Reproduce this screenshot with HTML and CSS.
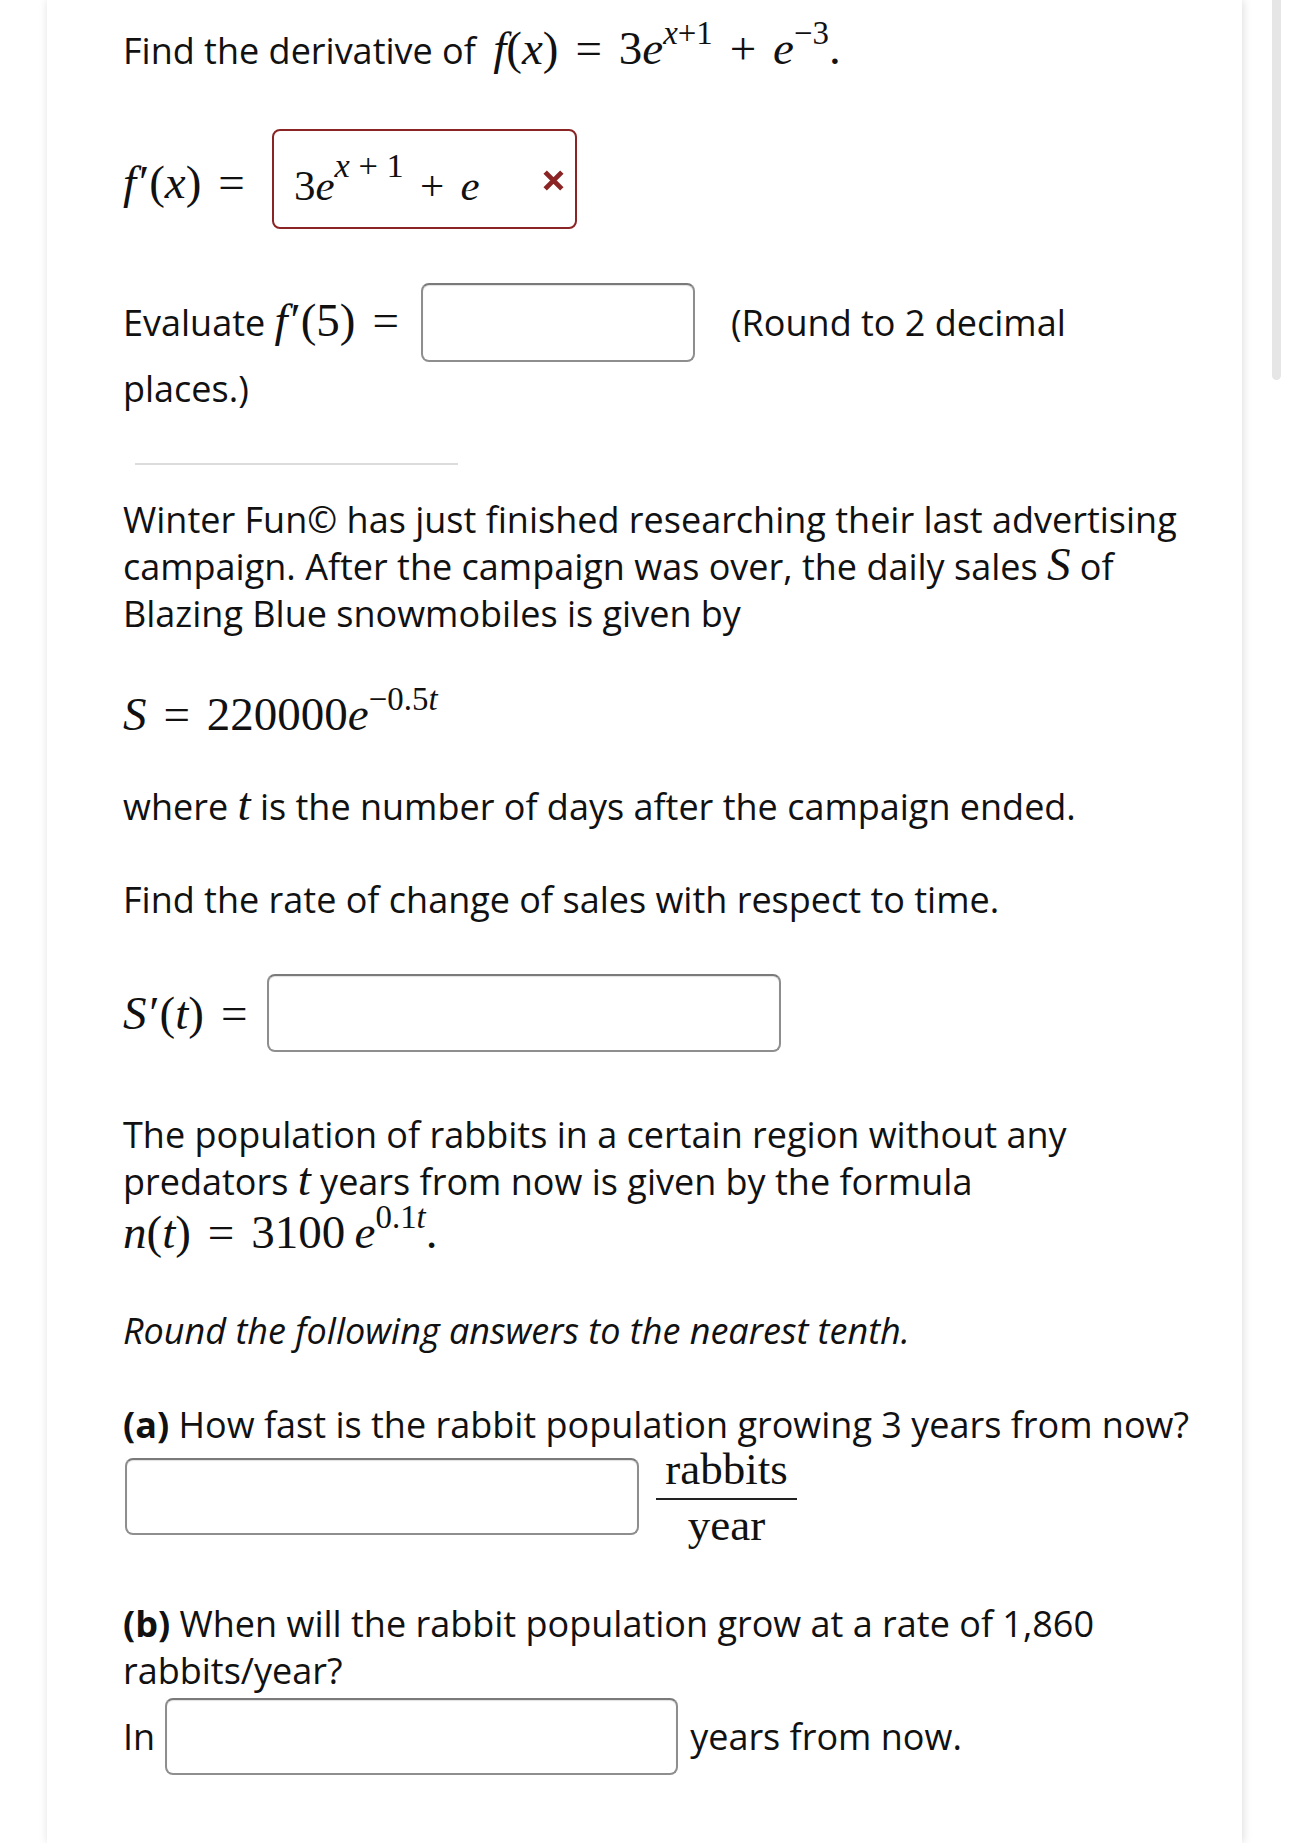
FILE: index.html
```html
<!DOCTYPE html>
<html lang="en">
<head>
  <meta charset="UTF-8">
  <meta name="viewport" content="width=device-width, initial-scale=1.0">
  <title>Exponential Functions - Homework</title>
  <link rel="stylesheet" href="styles.css">
</head>
<body>
  <div class="scroll-thumb"></div>

  <main class="sheet">
    <!-- Question 1: derivative of f -->
    <p class="lead">Find the derivative of <span class="m"><i>f</i>(<i>x</i>)<span class="op">=</span>3<i>e</i><sup><i>x</i>+1</sup><span class="op">+</span><i>e</i><sup>−3</sup>.</span></p>

    <div class="row deriv-row">
      <span class="label m"><i>f</i><span class="pr">′</span>(<i>x</i>)<span class="op">=</span></span>
      <div class="field wrong">
        <span class="entry">3<i>e</i><sup><i>x</i><span class="op">+</span>1</sup><span class="op">+</span><i>e</i></span>
        <svg class="mark" viewBox="0 0 24 24" width="25" height="25">
          <path d="M4 4 L20 20 M20 4 L4 20" stroke="#8b2424" stroke-width="4.6" fill="none"/>
        </svg>
      </div>
    </div>

    <div class="row eval-row">
      <span class="label">Evaluate <span class="m"><i>f</i><span class="pr">′</span>(5)<span class="op">=</span></span></span>
      <div class="field eval-field"></div>
      <span class="hint">(Round to 2 decimal</span>
    </div>
    <p>places.)</p>

    <hr class="divider">

    <!-- Question 2: sales after the campaign -->
    <p class="story">Winter Fun© has just finished researching their last advertising<br>
      campaign. After the campaign was over, the daily sales <span class="m"><i>S</i></span> of<br>
      Blazing Blue snowmobiles is given by</p>

    <p class="formula"><span class="m"><i>S</i><span class="op">=</span>220000<i>e</i><sup>−0.5<i>t</i></sup></span></p>

    <p class="where">where <span class="m"><i>t</i></span> is the number of days after the campaign ended.</p>

    <p class="task">Find the rate of change of sales with respect to time.</p>

    <div class="row rate-row">
      <span class="label m"><i>S</i><span class="pr">′</span>(<i>t</i>)<span class="op">=</span></span>
      <div class="field"></div>
    </div>

    <!-- Question 3: rabbit population -->
    <p class="population">The population of rabbits in a certain region without any<br>
      predators <span class="m"><i>t</i></span> years from now is given by the formula<br>
      <span class="m tall"><i>n</i>(<i>t</i>)<span class="op">=</span>3100<span class="thin"></span><i>e</i><sup>0.1<i>t</i></sup>.</span></p>

    <p class="note">Round the following answers to the nearest tenth.</p>

    <p class="part-a"><b>(a)</b> How fast is the rabbit population growing 3 years from now?</p>
    <div class="row growth-row">
      <div class="field"></div>
      <span class="m frac">
        <span class="num">rabbits</span>
        <span class="den">year</span>
      </span>
    </div>

    <p class="part-b"><b>(b)</b> When will the rabbit population grow at a rate of 1,860<br>
      rabbits/year?</p>
    <div class="row when-row">
      <span>In</span>
      <div class="field"></div>
      <span>years from now.</span>
    </div>
  </main>
</body>
</html>
```

FILE: styles.css
```css
* {
  box-sizing: border-box;
}

body {
  margin: 0;
  background-color: #fff;
  font-family: 'Open Sans', 'Noto Sans', sans-serif;
  font-size: 36px;
  color: #111;
}

.scroll-thumb {
  position: fixed;
  top: 0;
  left: 1272px;
  width: 9px;
  height: 380px;
  background-color: #e6e6e6;
  border-radius: 0 0 5px 5px;
}

.sheet {
  width: 1195px;
  min-height: 1843px;
  margin-left: 47px;
  padding: 24px 0 40px 76px;
  background-color: #fff;
  box-shadow: 1px 0 9px rgba(0, 0, 0, 0.14);
}

/* text sits 3px low in its 47px line */
p {
  margin: 0 0 -3px;
  padding-top: 3px;
  line-height: 47px;
}

/* math set in a serif face */
.m {
  font-family: 'Liberation Serif', 'Times New Roman', serif;
  font-size: 47px;
  line-height: 0;
  white-space: nowrap;
}

.m.tall {
  line-height: 1.15;
}

.m sup {
  font-size: 0.7em;
  line-height: 0;
  vertical-align: 0.6em;
}

.m .op {
  margin: 0 0.36em;
}

.m sup .op {
  margin: 0;
}

.m .pr {
  margin: 0 0 0 0.06em;
}

.m .thin {
  display: inline-block;
  width: 0.2em;
}

.lead .m {
  margin-left: 8px;
}

.row {
  display: flex;
  align-items: center;
  line-height: 47px;
}

.label {
  flex: none;
}

/* answer boxes */
.field {
  flex: none;
  width: 514px;
  height: 78px;
  border: 2px solid #8e8e8e;
  border-top-color: #7a7a7a;
  border-radius: 8px;
  background-color: #fff;
  box-shadow: inset 0 1px 1px rgba(0, 0, 0, 0.12);
}

.field.wrong {
  width: 305px;
  height: 100px;
  border-color: #8b2424;
  box-shadow: none;
  display: flex;
  align-items: flex-end;
  justify-content: space-between;
  padding: 0 9px 0 20px;
}

.entry {
  font-family: 'Liberation Serif', 'Times New Roman', serif;
  font-size: 43px;
  line-height: 43px;
  margin-bottom: 20px;
  white-space: nowrap;
}

.entry sup {
  font-size: 0.8em;
  line-height: 0;
  vertical-align: 0.68em;
}

.entry sup .op {
  margin: 0 0.25em;
}

.entry .op {
  margin: 0 0.38em;
}

.mark {
  align-self: center;
  margin-top: 2px;
}

.deriv-row {
  margin-top: 58px;
}

.deriv-row .label {
  width: 149px;
  padding-top: 6px;
}

.eval-row {
  margin-top: 54px;
}

.eval-row .label {
  width: 298px;
}

.eval-field {
  width: 274px;
  height: 79px;
}

.hint {
  margin-left: 36px;
}

.divider {
  width: 323px;
  height: 2px;
  margin: 54px 0 0 12px;
  border: 0;
  background-color: #dcdcdc;
}

.story {
  margin-top: 28px;
}

.formula {
  margin-top: 56px;
}

.where {
  margin-top: 43px;
}

.task {
  margin-top: 46px;
}

.rate-row {
  margin-top: 54px;
}

.rate-row .label {
  width: 144px;
}

.population {
  margin-top: 56px;
}

.note {
  margin-top: 48px;
  font-style: italic;
}

.part-a {
  margin-top: 47px;
}

.growth-row {
  margin-top: 13px;
  padding-left: 2px;
}

.growth-row .field {
  height: 77px;
}

/* rabbits over year, kept within the box height */
.frac {
  display: inline-flex;
  flex-direction: column;
  align-items: center;
  width: 141px;
  margin: -9px 0 -9px 17px;
  font-size: 45px;
}

.frac .num {
  width: 100%;
  text-align: center;
  line-height: 38px;
  padding-bottom: 10px;
  border-bottom: 2px solid #222;
}

.frac .den {
  line-height: 38px;
  padding-top: 6px;
}

.part-b {
  margin-top: 62px;
}

.when-row {
  margin-top: 7px;
}

.when-row .field {
  width: 513px;
  height: 77px;
  margin: 0 12px 0 10px;
}
```
